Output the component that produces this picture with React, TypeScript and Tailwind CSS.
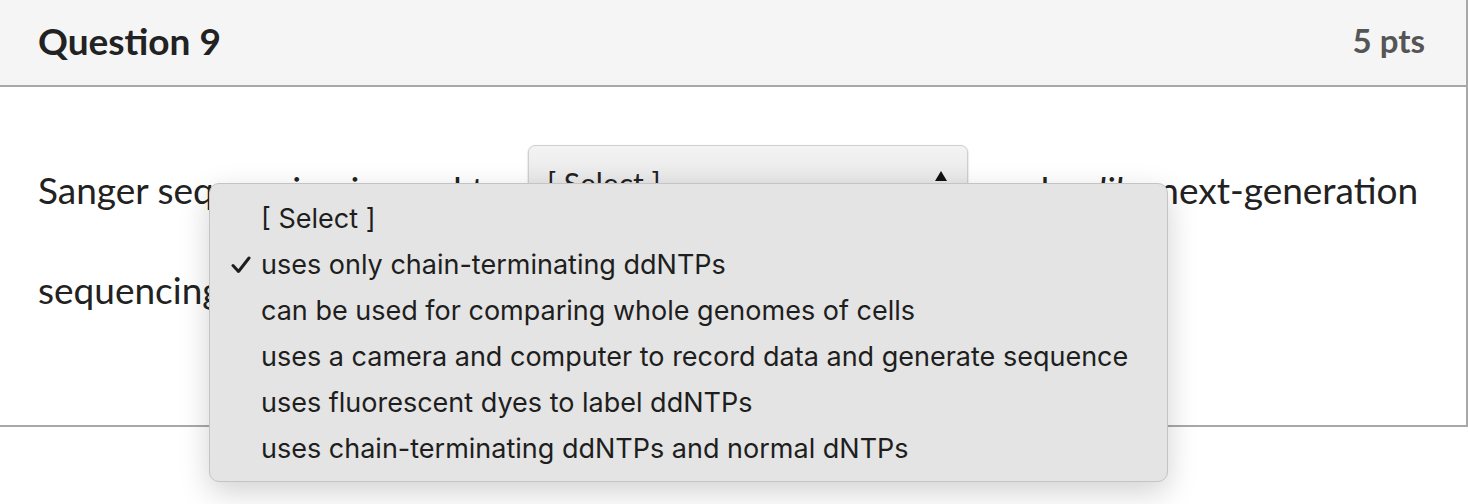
const options = [
  'uses only chain-terminating ddNTPs',
  'can be used for comparing whole genomes of cells',
  'uses a camera and computer to record data and generate sequence',
  'uses fluorescent dyes to label ddNTPs',
  'uses chain-terminating ddNTPs and normal dNTPs',
];

export default function App() {
  return (
    <div className="relative h-[504px] w-[1468px] overflow-hidden bg-white font-['Lato','Liberation_Sans',sans-serif]">
      <div className="w-[1468px] border-b-2 border-r-2 border-[#a8a8a8]">
        <div className="flex h-[87px] items-center justify-between border-b-2 border-[#a8a8a8] bg-[#f5f5f5] pb-[4px] pl-[38px] pr-[41px]">
          <h2 className="text-[37px] font-bold text-[#222]">Question 9</h2>
          <span className="text-[33px] font-bold text-[#555]">5 pts</span>
        </div>
        <div className="h-[338px] pl-[38px] pr-[40px] pt-[53px] text-[37px] leading-[100px] text-[#222]">
          Sanger sequencing is used to{' '}
          <span className="ml-[13px] mr-[12px] inline-flex h-[62px] w-[440px] translate-y-[-19px] items-center justify-between rounded-[7px] border border-[#cfcfcf] bg-gradient-to-b from-[#f3f3f3] to-[#e2e2e2] px-[18px] align-middle leading-none text-[#222] shadow-[0_1px_2px_rgba(0,0,0,0.25)]">
            <span className="mt-[14px] text-[30px]">[ Select ]</span>
            <svg width="12" height="10" viewBox="0 0 12 10" className="mr-[2px]">
              <path d="M6 0 L12 10 L0 10 Z" fill="#111" />
            </svg>
          </span>{' '}
          and <em>unlike</em> next-generation sequencing, it
        </div>
      </div>

      <div className="absolute left-[209px] top-[183px] w-[959px] rounded-[10px] border border-[#c4c4c4] bg-[#e3e4e3] pb-[9px] pt-[12px] font-['Inter','Liberation_Sans',sans-serif] text-[27px] text-[#1e1e1e] shadow-[0_10px_30px_rgba(0,0,0,0.18)]">
        <div className="flex h-[46px] items-center pl-[51px]">[ Select ]</div>
        {options.map((opt, i) => (
          <div key={opt} className="relative flex h-[46px] items-center pl-[51px]">
            {i === 0 && (
              <svg width="20" height="18" viewBox="0 0 20 18" className="absolute left-[21px] top-[14px]">
                <path d="M2 9.5 L7.5 15.5 L18 2" fill="none" stroke="#1e1e1e" strokeWidth="3" strokeLinecap="round" strokeLinejoin="round" />
              </svg>
            )}
            {opt}
          </div>
        ))}
      </div>
    </div>
  );
}
